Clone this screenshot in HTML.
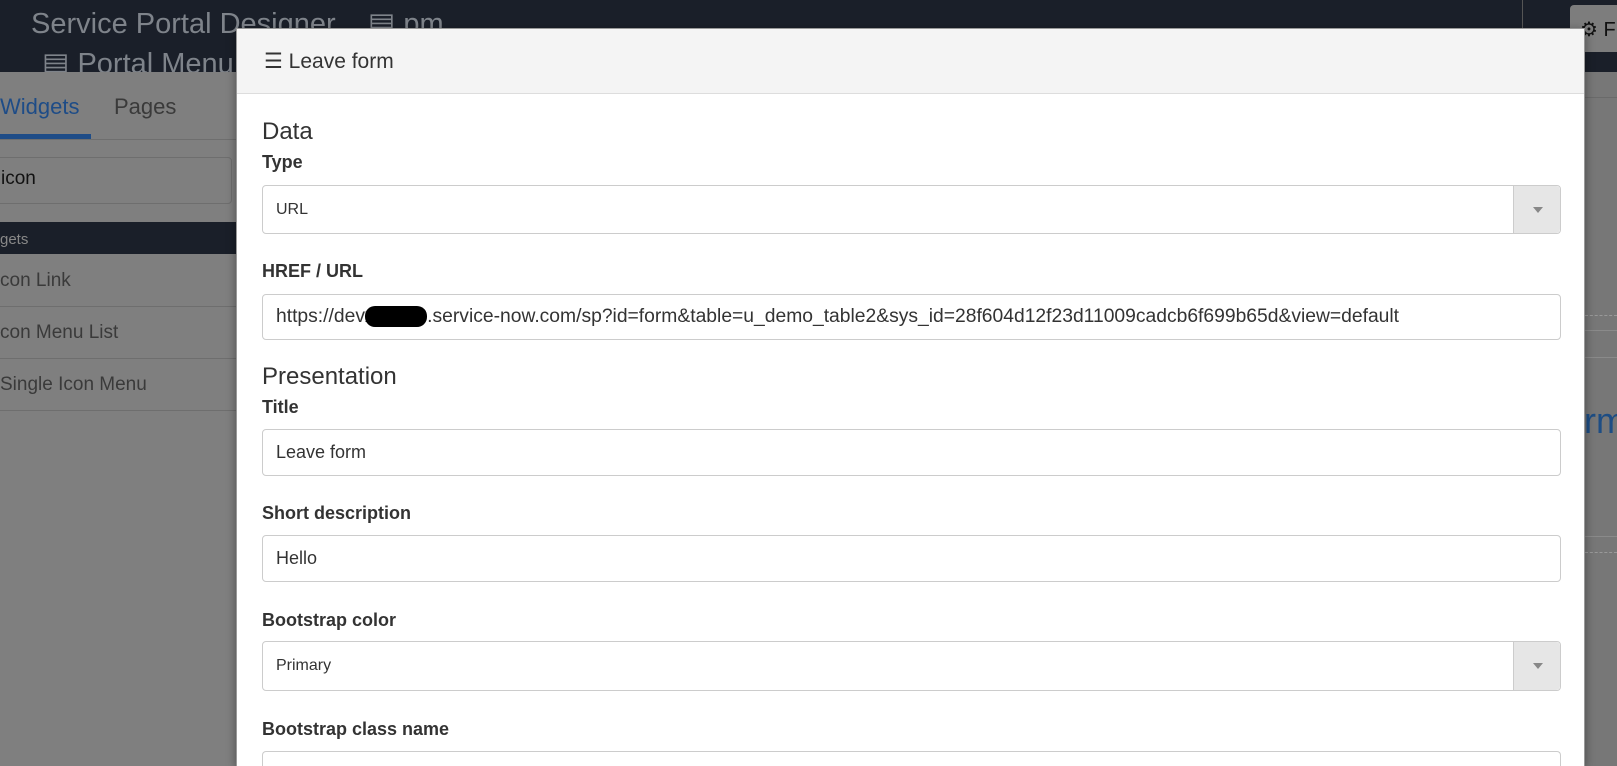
<!DOCTYPE html>
<html style="overflow:hidden;width:1617px;height:766px"><head><meta charset="utf-8"><style>
*{box-sizing:border-box;margin:0;padding:0}
body{width:1617px;height:766px;overflow:hidden;position:relative;background:#7b7b7b;font-family:"Liberation Sans",Arial,sans-serif;color:#333}
.a{position:absolute}
.top{left:0;top:0;width:1617px;height:72px;background:#1a1f29}
.lbl{position:absolute;left:262px;font-weight:bold;font-size:18px;color:#333}
.inp{position:absolute;left:262px;width:1299px;border:1px solid #ccc;border-radius:4px;background:#fff;font-size:18px;padding-left:13px;color:#333}
.sel{font-size:16px}
.arr{position:absolute;right:0;top:0;bottom:0;width:47px;background:#e6e6e6;border-left:1px solid #ccc;border-radius:0 4px 4px 0}
.arr:after{content:"";position:absolute;left:19px;top:50%;margin-top:-3px;border-left:5px solid transparent;border-right:5px solid transparent;border-top:6px solid #888}
.h{position:absolute;left:262px;font-size:24px;color:#333}
</style></head><body>
<div class="a top"></div>
<div class="a" style="left:31px;top:6px;font-size:29px;color:#7e838a">Service Portal Designer &nbsp;&nbsp; ▤ pm</div>
<div class="a" style="left:42px;top:46px;font-size:29px;color:#7e838a">▤ Portal Menu</div>
<div class="a" style="left:1522px;top:0;width:1px;height:55px;background:#555"></div>
<div class="a" style="left:1570px;top:5px;width:60px;height:47px;background:#7d7d7d;border-radius:4px;font-size:20px;color:#111;padding:12px 0 0 10px">⚙ F</div>
<div class="a" style="left:0;top:72px;width:236px;height:694px;background:#7f7f7f"></div>
<div class="a" style="left:0;top:94px;font-size:22px;color:#1e4c87">Widgets</div>
<div class="a" style="left:114px;top:94px;font-size:22px;color:#3a3a3a">Pages</div>
<div class="a" style="left:0;top:134px;width:91px;height:5px;background:#1e4c87"></div>
<div class="a" style="left:0;top:139px;width:236px;height:1px;background:#6e6e6e"></div>
<div class="a" style="left:-5px;top:157px;width:237px;height:47px;border:1px solid #6e6e6e;border-radius:4px;font-size:19px;color:#111;padding:10px 0 0 5px">icon</div>
<div class="a" style="left:0;top:222px;width:236px;height:32px;background:#1a1f29;font-size:15px;color:#888;padding:9px 0 0 0">gets</div>
<div class="a" style="left:0;top:270px;font-size:19px;color:#3a3a3a">con Link</div>
<div class="a" style="left:0;top:306px;width:236px;height:1px;background:#6e6e6e"></div>
<div class="a" style="left:0;top:322px;font-size:19px;color:#3a3a3a">con Menu List</div>
<div class="a" style="left:0;top:358px;width:236px;height:1px;background:#6e6e6e"></div>
<div class="a" style="left:0;top:374px;font-size:19px;color:#3a3a3a">Single Icon Menu</div>
<div class="a" style="left:0;top:410px;width:236px;height:1px;background:#6e6e6e"></div>
<div class="a" style="left:1585px;top:72px;width:32px;height:694px;background:#777"></div>
<div class="a" style="left:1585px;top:52px;width:32px;height:20px;background:#1a1f29"></div>
<div class="a" style="left:1585px;top:97px;width:32px;height:1px;background:#6a6a6a"></div>
<div class="a" style="left:1585px;top:315px;width:32px;height:1px;border-top:1px dashed #999"></div>
<div class="a" style="left:1585px;top:330px;width:32px;height:1px;background:#8a8a8a"></div>
<div class="a" style="left:1585px;top:357px;width:32px;height:1px;background:#8a8a8a"></div>
<div class="a" style="left:1584px;top:400px;font-size:36px;color:#1d4d84">rm</div>
<div class="a" style="left:1585px;top:536px;width:32px;height:1px;background:#8a8a8a"></div>
<div class="a" style="left:1585px;top:552px;width:32px;height:1px;border-top:1px dashed #999"></div>
<div class="a" style="left:236px;top:28px;width:1349px;height:738px;background:#fff;border:1px solid #999;border-bottom:none;box-shadow:0 3px 9px rgba(0,0,0,.4)"></div>
<div class="a" style="left:237px;top:29px;width:1347px;height:65px;background:#f4f4f4;border-bottom:1px solid #ddd"></div>
<div class="a" style="left:264px;top:49px;font-size:21px;color:#333">☰ Leave form</div>
<div class="h" style="top:118px">Data</div>
<div class="lbl" style="top:152px">Type</div>
<div class="inp sel" style="top:185px;height:49px;line-height:47px">URL<div class="arr"></div></div>
<div class="lbl" style="top:261px">HREF / URL</div>
<div class="inp" style="top:294px;height:46px;line-height:44px;font-size:19.3px">https://dev<span style="background:#000;border-radius:10px;color:#000">xx0000</span>.service-now.com/sp?id=form&amp;table=u_demo_table2&amp;sys_id=28f604d12f23d11009cadcb6f699b65d&amp;view=default</div>
<div class="h" style="top:363px">Presentation</div>
<div class="lbl" style="top:397px">Title</div>
<div class="inp" style="top:429px;height:47px;line-height:45px">Leave form</div>
<div class="lbl" style="top:503px">Short description</div>
<div class="inp" style="top:535px;height:47px;line-height:45px">Hello</div>
<div class="lbl" style="top:610px">Bootstrap color</div>
<div class="inp sel" style="top:641px;height:50px;line-height:48px">Primary<div class="arr"></div></div>
<div class="lbl" style="top:719px">Bootstrap class name</div>
<div class="inp" style="top:751px;height:15px;border-bottom:none;border-radius:4px 4px 0 0"></div>
</body></html>
